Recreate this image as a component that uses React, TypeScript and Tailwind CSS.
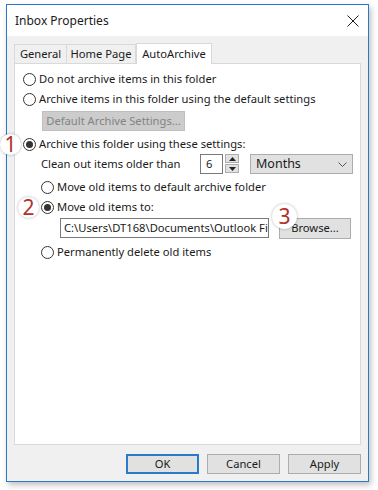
import React from "react";

const font = { fontFamily: '"Noto Sans", "Open Sans", sans-serif' };

function Radio({ checked }: { checked?: boolean }) {
  return (
    <span className="w-[13px] h-[13px] rounded-full border border-[#333333] bg-white flex items-center justify-center shrink-0">
      {checked && <span className="w-[7px] h-[7px] rounded-full bg-[#333333]" />}
    </span>
  );
}

function Callout({ n, className }: { n: string; className: string }) {
  return (
    <span
      className={
        "absolute rounded-full bg-white shadow-[0_0_3px_rgba(0,0,0,0.3)] flex items-center justify-center text-[#b3302c] text-[21px] leading-none " +
        className
      }
    >
      {n}
    </span>
  );
}

export default function App() {
  return (
    <div className="w-[378px] h-[490px] bg-white pt-[4px] pl-[6px] text-[11.2px] text-[#1a1a1a] whitespace-nowrap" style={font}>
      <div className="w-[363px] h-[478px] border border-[#2a7bc5] bg-[#f0f0f0] flex flex-col shadow-[2px_3px_6px_rgba(0,0,0,0.25)] relative">
        <div className="h-[31px] bg-white flex items-center justify-between pl-[8px] pr-[9px] shrink-0">
          <span className="text-[12px] text-[#1a1a1a]">Inbox Properties</span>
          <svg width="12" height="12" viewBox="0 0 12 12">
            <path d="M0.5 0.5L11.5 11.5M11.5 0.5L0.5 11.5" stroke="#1a1a1a" strokeWidth="1" />
          </svg>
        </div>
        <div className="px-[7px] pt-[6px] flex flex-col">
          <div className="flex items-end h-[21px]">
            <div className="w-[53px] h-[19px] border border-b-0 border-[#d9d9d9] flex items-center justify-center">General</div>
            <div className="w-[69px] h-[19px] border border-b-0 border-l-0 border-[#d9d9d9] flex items-center justify-center">Home Page</div>
            <div className="w-[76px] h-[21px] border border-b-0 border-[#d9d9d9] bg-white flex items-center justify-center -mb-[1px] relative z-10">AutoArchive</div>
          </div>
          <div className="h-[382px] border border-[#d9d9d9] bg-white flex flex-col pt-[5px] pl-[8px] relative">
            <div className="h-[20px] flex items-center gap-[3px]">
              <Radio />
              <span>Do not archive items in this folder</span>
            </div>
            <div className="h-[20px] flex items-center gap-[3px]">
              <Radio />
              <span>Archive items in this folder using the default settings</span>
            </div>
            <div className="mt-[2px] ml-[19px] w-[143px] h-[20px] bg-[#cccccc] border border-[#bfbfbf] text-[#838383] flex items-center justify-center">
              Default Archive Settings...
            </div>
            <div className="mt-[3px] h-[20px] flex items-center gap-[3px]">
              <Radio checked />
              <span>Archive this folder using these settings:</span>
            </div>
            <div className="h-[20px] flex items-center">
              <span className="ml-[18px] w-[159px]">Clean out items older than</span>
              <div className="w-[23px] h-[20px] border border-[#7a7a7a] flex items-center pl-[5px]">6</div>
              <div className="ml-[2px] w-[14px] h-[20px] flex flex-col gap-[1px]">
                <div className="h-[9px] border border-[#adadad] bg-[#e1e1e1] flex items-center justify-center">
                  <svg width="7" height="4" viewBox="0 0 7 4"><path d="M0 4L3.5 0L7 4Z" fill="#222" /></svg>
                </div>
                <div className="h-[9px] border border-[#adadad] bg-[#e1e1e1] flex items-center justify-center">
                  <svg width="7" height="4" viewBox="0 0 7 4"><path d="M0 0L3.5 4L7 0Z" fill="#222" /></svg>
                </div>
              </div>
              <div className="ml-[11px] w-[103px] h-[20px] border border-[#adadad] bg-[#e1e1e1] flex items-center justify-between pl-[5px] pr-[5px]">
                <span className="text-[12.5px]">Months</span>
                <svg width="9" height="5" viewBox="0 0 9 5">
                  <path d="M0.5 0.5L4.5 4.5L8.5 0.5" stroke="#555" fill="none" strokeWidth="1" />
                </svg>
              </div>
            </div>
            <div className="mt-[3px] ml-[18px] h-[20px] flex items-center gap-[3px]">
              <Radio />
              <span>Move old items to default archive folder</span>
            </div>
            <div className="ml-[18px] h-[20px] flex items-center gap-[3px]">
              <Radio checked />
              <span>Move old items to:</span>
            </div>
            <div className="mt-[1px] flex items-start">
              <div className="ml-[37px] w-[209px] h-[20px] border border-[#7a7a7a] flex items-center pl-[3px] overflow-hidden">
                <span>C:\Users\DT168\Documents\Outlook Files</span>
              </div>
              <div className="ml-[10px] w-[72px] h-[21px] border border-[#adadad] bg-[#e1e1e1] flex items-center justify-center">
                Browse...
              </div>
            </div>
            <div className="mt-[3px] ml-[18px] h-[20px] flex items-center gap-[3px]">
              <Radio />
              <span>Permanently delete old items</span>
            </div>
          </div>
        </div>
        <div className="flex justify-end gap-[8px] pr-[7px] mt-[9px]">
          <div className="w-[73px] h-[20px] border-2 border-[#2a7bc5] bg-[#e1e1e1] flex items-center justify-center">OK</div>
          <div className="w-[73px] h-[20px] border border-[#adadad] bg-[#e1e1e1] flex items-center justify-center">Cancel</div>
          <div className="w-[73px] h-[20px] border border-[#adadad] bg-[#e1e1e1] flex items-center justify-center">Apply</div>
        </div>
        <Callout n="1" className="left-[-7px] top-[129px] w-[21px] h-[21px]" />
        <Callout n="2" className="left-[11px] top-[192px] w-[21px] h-[21px]" />
        <Callout n="3" className="left-[265px] top-[199px] w-[25px] h-[25px]" />
      </div>
    </div>
  );
}
